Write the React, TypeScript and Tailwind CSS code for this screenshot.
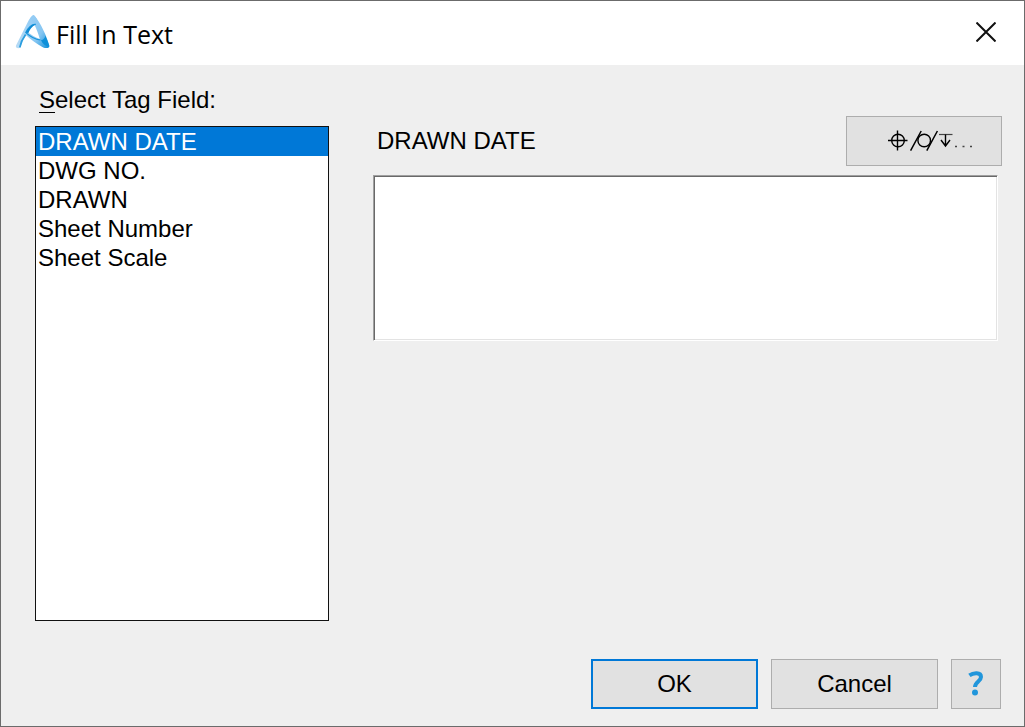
import React, { useState } from 'react';

interface TagField {
  id: string;
  label: string;
}

const TAG_FIELDS: TagField[] = [
  { id: 'drawn-date', label: 'DRAWN DATE' },
  { id: 'dwg-no', label: 'DWG NO.' },
  { id: 'drawn', label: 'DRAWN' },
  { id: 'sheet-number', label: 'Sheet Number' },
  { id: 'sheet-scale', label: 'Sheet Scale' },
];

const AppLogo: React.FC = () => (
  <svg width="36" height="36" viewBox="0 0 36 36" aria-hidden="true">
    <defs>
      <linearGradient id="logo-left" x1="0" y1="1" x2="1" y2="0">
        <stop offset="0" stopColor="#b9dcf5" />
        <stop offset="1" stopColor="#8ac8f5" />
      </linearGradient>
      <linearGradient id="logo-right" x1="0" y1="0" x2="1" y2="1">
        <stop offset="0" stopColor="#9ccff5" />
        <stop offset="0.6" stopColor="#86c6f2" />
        <stop offset="1" stopColor="#0c8ed8" />
      </linearGradient>
    </defs>
    <g transform="translate(0 1)">
      <path d="M18.2 0 C16.2 1.2 15 3.2 13.6 5.6 L1 30.6 C0.2 33 2.6 33.8 5.6 32.8 C6.2 28.4 8.4 24.4 11.4 19.8 L13.2 17.4 C14.8 14 17 11 20.6 10 L22.6 6 C21.4 3 20.4 0.8 18.2 0Z" fill="url(#logo-left)" />
      <path d="M18.2 0 C16.2 3.4 17.2 7.8 19.6 10 C21.6 14 23.4 19 24.8 24 C20.6 22.4 16.6 20.2 12.8 17.2 L10.8 20 C16 24.8 22 29.4 28.2 32.4 C31 33.6 34.8 33.4 34.4 30.8 C31.6 20.6 23.8 3.6 18.2 0Z" fill="url(#logo-right)" />
      <path d="M20.8 9.4 C15.8 8.8 13.2 12.8 10.8 17.6 C15 21.4 20 24.4 25.4 25" fill="none" stroke="#1492da" strokeWidth="1.2" />
      <path d="M20 9.4 C15.6 9.6 13 13.8 10.8 17.8 L13.4 18 C14.6 14.6 16.6 11.8 20 9.4Z" fill="#0f8bd4" />
      <path d="M10.6 19.6 C7.6 23.8 5.6 28 4.8 32.4" fill="none" stroke="#2b9edf" strokeWidth="1.7" />
      <path d="M26 25 C27.2 28.6 30.4 31 33.8 32 C34.4 29.6 32.4 25.4 30.2 20.4 C30.2 22.8 28.6 24.8 26 25Z" fill="#0e90d9" />
    </g>
  </svg>
);

const CloseIcon: React.FC = () => (
  <svg width="20" height="20" viewBox="0 0 20 20" aria-hidden="true">
    <path d="M0.5 0.5 L19.5 19.5 M19.5 0.5 L0.5 19.5" stroke="#111" strokeWidth="2" />
  </svg>
);

// Position, cylindricity and depth symbols, followed by an ellipsis
const GdtSymbols: React.FC = () => (
  <svg width="86" height="24" viewBox="0 0 86 24" fill="none" stroke="#000" strokeWidth="1.4" aria-hidden="true">
    <circle cx="10" cy="12.5" r="6.3" />
    <path d="M0 12.5 H19.5 M9.5 2.5 V22.5" />
    <path d="M22.6 22.6 L33.2 3 M38.8 22.6 L49.4 3" strokeWidth="1.5" />
    <circle cx="36.2" cy="12.5" r="6.3" />
    <path d="M51 6.5 H64.5" stroke="#444" strokeWidth="1.2" />
    <path d="M57.5 6.5 V17 M53 12 L57.5 18 L62 12" />
    <path d="M67 18.5 H69 M74.5 18.5 H76.5 M82 18.5 H84" stroke="#444" />
  </svg>
);

const HelpIcon: React.FC = () => (
  <svg width="16" height="26" viewBox="0 0 16 26" aria-hidden="true">
    <path d="M1.4 5.4 C5.4 2.6 13 2 13 7 C13 11.4 7 11.6 7 17" fill="none" stroke="#2196db" strokeWidth="4" />
    <circle cx="7" cy="22.4" r="3" fill="#2196db" />
  </svg>
);

interface DialogButtonProps {
  children: React.ReactNode;
  className?: string;
  label?: string;
}

const DialogButton: React.FC<DialogButtonProps> = ({ children, className = '', label }) => (
  <button
    type="button"
    aria-label={label}
    className={`flex h-[50px] items-center justify-center bg-[#e1e1e1] pb-0.5 hover:bg-[#e5f1fb] ${className}`}
  >
    {children}
  </button>
);

export default function App() {
  const [selected, setSelected] = useState('drawn-date');
  const [values, setValues] = useState<Record<string, string>>({});

  const field = TAG_FIELDS.find(f => f.id === selected) ?? TAG_FIELDS[0];

  return (
    <div className="flex min-h-screen flex-col border border-[#6b6b6b] bg-[#efefef] font-['Liberation_Sans',Arial,sans-serif] text-2xl leading-[29px] text-black">
      <header className="flex h-16 items-center justify-between bg-white pr-7 pb-0.5 pl-3.5">
        <div className="flex items-center gap-[5px]">
          <AppLogo />
          <h1 className="pt-1 font-['Open_Sans','Noto_Sans',sans-serif] text-[25px]">Fill In Text</h1>
        </div>
        <button type="button" aria-label="Close">
          <CloseIcon />
        </button>
      </header>

      <main className="flex flex-1 gap-11 pt-5 pr-[22px] pl-[34px]">
        <div className="flex w-[294px] shrink-0 flex-col gap-3">
          <label htmlFor="tag-field" className="pl-1">
            <span className="underline decoration-1 underline-offset-4">S</span>elect Tag Field:
          </label>
          <select
            id="tag-field"
            size={5}
            value={selected}
            onChange={e => setSelected(e.target.value)}
            className="flex-1 appearance-none overflow-hidden border border-[#111] bg-white outline-none"
          >
            {TAG_FIELDS.map(f => (
              <option
                key={f.id}
                value={f.id}
                className="h-[29px] p-0 pt-px pl-0.5 leading-[27px] checked:bg-[linear-gradient(#0078d7,#0078d7)] checked:[-webkit-text-fill-color:white]"
              >
                {f.label}
              </option>
            ))}
          </select>
        </div>

        <div className="flex flex-1 flex-col gap-[9px] pt-[31px]">
          <div className="flex items-center justify-between pl-1">
            <label htmlFor="tag-value" className="pb-0.5">{field.label}</label>
            <DialogButton label="Insert symbol" className="w-[156px] border border-[#adadad] pl-3.5">
              <GdtSymbols />
            </DialogButton>
          </div>
          <textarea
            id="tag-value"
            value={values[selected] ?? ''}
            onChange={e => setValues({ ...values, [selected]: e.target.value })}
            className="mr-1 h-[166px] resize-none border border-t-[#a0a0a0] border-r-white border-b-white border-l-[#a0a0a0] bg-white px-1 shadow-[inset_1px_1px_0_#696969,inset_-1px_-1px_0_#e3e3e3] outline-none"
          />
        </div>
      </main>

      <footer className="flex justify-end gap-[13px] pt-[38px] pr-[23px] pb-[17px]">
        <DialogButton className="w-[167px] border-2 border-[#0078d7]">OK</DialogButton>
        <DialogButton className="w-[167px] border border-[#adadad]">Cancel</DialogButton>
        <DialogButton label="Help" className="w-[50px] border border-[#adadad]">
          <HelpIcon />
        </DialogButton>
      </footer>
    </div>
  );
}
